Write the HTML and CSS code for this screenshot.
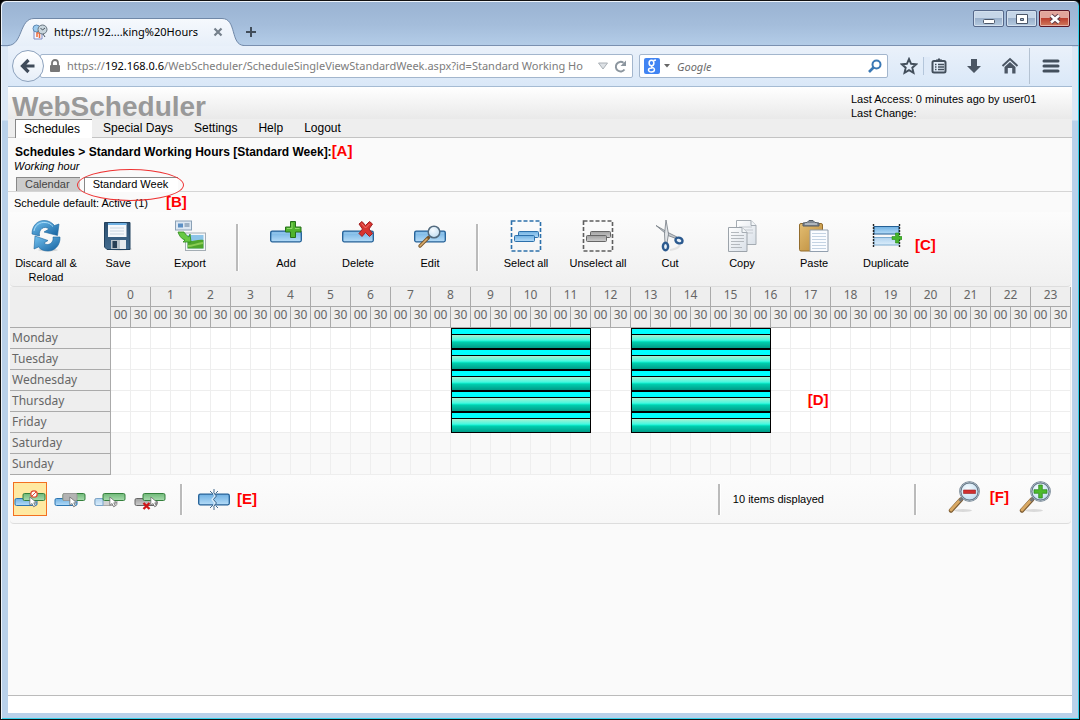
FILE: index.html
```html
<!DOCTYPE html>
<html lang="en">
<head>
    <meta charset="UTF-8">
    <meta name="viewport" content="width=device-width, initial-scale=1.0">
    <title>WebScheduler</title>
    <link rel="stylesheet" href="styles.css">
</head>
<body>
    <!-- Shared gradients and symbols -->
    <svg class="defs" width="0" height="0" aria-hidden="true">
        <defs>
            <linearGradient id="blue" x1="0" y1="0" x2="0" y2="1"><stop offset="0" stop-color="#6fb0e2"/><stop offset="1" stop-color="#b5dcf8"/></linearGradient>
            <linearGradient id="paleBlue" x1="0" y1="0" x2="0" y2="1"><stop offset="0" stop-color="#b0d2ee"/><stop offset="1" stop-color="#dceefb"/></linearGradient>
            <linearGradient id="gray" x1="0" y1="0" x2="0" y2="1"><stop offset="0" stop-color="#a0a0a0"/><stop offset="1" stop-color="#cdcdcd"/></linearGradient>
            <linearGradient id="green" x1="0" y1="0" x2="0" y2="1"><stop offset="0" stop-color="#6fb878"/><stop offset="1" stop-color="#a9dcae"/></linearGradient>
            <linearGradient id="arrowBlue" x1="0" y1="0" x2="1" y2="1"><stop offset="0" stop-color="#75c4f2"/><stop offset="1" stop-color="#14609e"/></linearGradient>
            <linearGradient id="paper" x1="0" y1="0" x2="1" y2="1"><stop offset="0" stop-color="#ffffff"/><stop offset="1" stop-color="#d9e0e8"/></linearGradient>
            <linearGradient id="board" x1="0" y1="0" x2="1" y2="1"><stop offset="0" stop-color="#e3bd72"/><stop offset="1" stop-color="#b98938"/></linearGradient>
            <linearGradient id="disk" x1="0" y1="0" x2="0" y2="1"><stop offset="0" stop-color="#2c4f70"/><stop offset="1" stop-color="#426b8e"/></linearGradient>
            <radialGradient id="glass" cx="0.4" cy="0.35" r="0.7"><stop offset="0" stop-color="#f6fbff"/><stop offset="1" stop-color="#bfdcf0"/></radialGradient>
            <symbol id="bar" viewBox="0 0 32 32">
                <rect x="0.7" y="11.2" width="30.6" height="10.6" rx="1.5" fill="url(#blue)" stroke="#215f96" stroke-width="1.3"/>
                <path d="M2 13h28" stroke="#9ccbee"/>
            </symbol>
            <symbol id="cursor" viewBox="0 0 12 14">
                <path d="M1 1v10l2.6-2.2 2 4 2-1-1.900-3.800h3.500z" fill="#fff" stroke="#666" stroke-width="0.9"/>
            </symbol>
            <symbol id="magnifier" viewBox="0 0 32 32">
                <ellipse cx="15" cy="29.500" rx="9" ry="1.500" fill="#000" opacity="0.12"/>
                <path d="M13 18.500 3 29.500" stroke="#7b5a2f" stroke-width="4.400" stroke-linecap="round"/>
                <path d="M12 19 3 29" stroke="#d9a964" stroke-width="2.800" stroke-linecap="round"/>
                <path d="m14.500 17-3 3" stroke="#777" stroke-width="3"/>
                <circle cx="21.500" cy="10.500" r="9.200" fill="url(#glass)" stroke="#5f7180" stroke-width="2.200"/>
                <circle cx="21.500" cy="10.500" r="9.400" fill="none" stroke="#b7c4ce" stroke-width="0.800"/>
            </symbol>
        </defs>
    </svg>

    <div class="window">
        <!-- Title bar -->
        <header class="titlebar">
            <div class="browser-tab">
                <svg class="tab-shape" width="236" height="28" viewBox="0 0 236 28" aria-hidden="true">
                    <defs><linearGradient id="tabFill" x1="0" y1="0" x2="0" y2="1"><stop offset="0" stop-color="#f6f9fd"/><stop offset="1" stop-color="#e7eff9"/></linearGradient></defs>
                    <path d="M0 27.500C15 27 11 .5 26 .5H214C229 .5 222 27 236 27.500V28H0Z" fill="url(#tabFill)"/>
                    <path d="M0 27.500C15 27 11 .5 26 .5H214C229 .5 222 27 236 27.500" fill="none" stroke="#7088a8"/>
                </svg>
                <svg class="favicon" width="16" height="16" viewBox="0 0 16 16" aria-hidden="true">
                    <path d="M2 5.500h8V15H2z" fill="#f7f7ff" stroke="#7e8ac2"/>
                    <path d="M5 8v5M5 8l3 2M7.500 10v4" stroke="#ee6c3b" stroke-width="1.500"/>
                    <circle cx="4.500" cy="4.500" r="3.500" fill="#9ccbee" stroke="#5d88b4"/>
                    <circle cx="10.500" cy="5.500" r="4.500" fill="#c9d6de" stroke="#66747f"/>
                    <path d="m8.500 4 2 2 2.500-2M11 10l2 3" fill="none" stroke="#48545e"/>
                </svg>
                <span class="tab-title">https://192....king%20Hours</span>
                <button class="tab-close" type="button" aria-label="Close tab">
                    <svg width="10" height="10" viewBox="0 0 10 10"><path d="m1.500 1.500 7 7m0-7-7 7" stroke="#75808b" stroke-width="2.200"/></svg>
                </button>
            </div>
            <button class="new-tab" type="button" aria-label="New tab">
                <svg width="12" height="12" viewBox="0 0 12 12"><path d="M6 1v10M1 6h10" stroke="#414d5a" stroke-width="2"/></svg>
            </button>
            <div class="window-buttons">
                <button type="button" aria-label="Minimize"><svg width="30" height="16" viewBox="0 0 30 16"><rect x="9.500" y="8.500" width="11" height="4" rx="1" fill="#fff" stroke="#4b5668"/></svg></button>
                <button type="button" aria-label="Maximize"><svg width="30" height="16" viewBox="0 0 30 16"><path d="M9.500 3.500h11v9h-11zM13.500 7.500h3v2h-3z" fill="#fff" fill-rule="evenodd" stroke="#4b5668"/></svg></button>
                <button class="close-window" type="button" aria-label="Close"><svg width="30" height="16" viewBox="0 0 30 16"><path d="m11 4.500 8 7m0-7-8 7" stroke="#5c3b47" stroke-width="4.500"/><path d="m11 4.500 8 7m0-7-8 7" stroke="#fff" stroke-width="2.600"/></svg></button>
            </div>
        </header>

        <!-- Address bar -->
        <div class="navbar">
            <button class="back" type="button" aria-label="Back">
                <svg width="16" height="16" viewBox="0 0 16 16"><path d="M14.500 8H4M8.500 2 2.500 8l6 6" fill="none" stroke="#3f4b59" stroke-width="3.200"/></svg>
            </button>
            <div class="url-box">
                <svg width="12" height="14" viewBox="0 0 12 14" aria-hidden="true"><path d="M3 6V4a3 3 0 0 1 6 0v2" fill="none" stroke="#777" stroke-width="1.800"/><rect x="1" y="6" width="10" height="7" rx="1" fill="#777"/></svg>
                <div class="url" role="textbox" aria-label="Address" contenteditable="true" spellcheck="false">https://<span class="host">192.168.0.6</span>/WebScheduler/ScheduleSingleViewStandardWeek.aspx?id=Standard Working Ho</div>
                <svg width="10" height="8" viewBox="0 0 10 8" aria-hidden="true"><path d="M.5 1h9L5 7z" fill="#dde1e5" stroke="#aab0b6"/></svg>
                <button type="button" aria-label="Reload"><svg width="13" height="13" viewBox="0 0 13 13"><path d="M10.500 9.500A4.800 4.800 0 1 1 9.500 2.800" fill="none" stroke="#8c969f" stroke-width="2"/><path d="M12 .5V6H6.500z" fill="#8c969f"/></svg></button>
            </div>
            <div class="search-box">
                <svg width="16" height="16" viewBox="0 0 16 16" aria-hidden="true"><rect width="16" height="16" rx="2" fill="#4184f3"/><ellipse cx="7.500" cy="5" rx="2.400" ry="2.800" fill="none" stroke="#fff" stroke-width="1.500"/><path d="M9.500 2.500 12 2M8 8c-2 1 2.500 1.500 2.500 3.500S8.500 14 7.300 14 4 13 4.500 11.500 8 10 8.500 10" fill="none" stroke="#fff" stroke-width="1.400"/></svg>
                <svg width="6" height="4" viewBox="0 0 6 4" aria-hidden="true"><path d="M0 0h6L3 3.500z" fill="#666"/></svg>
                <input type="text" placeholder="Google" aria-label="Search">
                <button type="button" aria-label="Search"><svg width="14" height="14" viewBox="0 0 14 14"><circle cx="8.500" cy="5.500" r="4" fill="none" stroke="#3a78b5" stroke-width="2"/><path d="m5.500 8.500-4.500 4.500" stroke="#3a78b5" stroke-width="2.600"/></svg></button>
            </div>
            <div class="nav-icons">
                <button type="button" aria-label="Bookmark"><svg width="18" height="18" viewBox="0 0 18 18"><path d="m9 2 2.100 4.800 5.100.5-3.900 3.400 1.200 5.200L9 13.200l-4.500 2.700 1.200-5.200-3.900-3.400 5.100-.5z" fill="none" stroke="#434f5c" stroke-width="1.900"/></svg></button>
                <button type="button" aria-label="Bookmarks list"><svg width="18" height="18" viewBox="0 0 18 18"><rect x="2.500" y="4" width="13" height="11.500" rx="1.500" fill="none" stroke="#434f5c" stroke-width="2"/><path d="M6 4.500V2.500h1.500L9 1l1.500 1.500H12v2z" fill="#434f5c"/><path d="M5 7.500h1.500M8 7.500h6M5 10h1.500M8 10h6M5 12.500h1.500M8 12.500h6" stroke="#434f5c" stroke-width="1.300"/></svg></button>
                <button type="button" aria-label="Downloads"><svg width="18" height="18" viewBox="0 0 18 18"><path d="M6 2h6v7h4l-7 7-7-7h4z" fill="#4b5664"/></svg></button>
                <button type="button" aria-label="Home"><svg width="18" height="18" viewBox="0 0 18 18"><path d="m1.500 9 7.500-7 7.500 7" fill="none" stroke="#4b5664" stroke-width="2"/><path d="m9 5 5.500 5v6.500h-3.300V11H6.800v5.500H3.500V10z" fill="#4b5664"/></svg></button>
                <button class="menu" type="button" aria-label="Menu"><svg width="18" height="18" viewBox="0 0 18 18"><path d="M2 4h14M2 9h14M2 14h14" stroke="#434f5c" stroke-width="3" stroke-linecap="round"/></svg></button>
            </div>
        </div>

        <main class="page">
            <div class="banner">
                <h1>WebScheduler</h1>
                <p class="last-access">Last Access: 0 minutes ago by user01<br>Last Change:</p>
            </div>
            <nav class="main-menu">
                <a class="active" href="#">Schedules</a>
                <a href="#">Special Days</a>
                <a href="#">Settings</a>
                <a href="#">Help</a>
                <a href="#">Logout</a>
            </nav>

            <h2>Schedules &gt; Standard Working Hours [Standard Week]:<span class="mark">[A]</span></h2>
            <p class="description">Working hour</p>
            <div class="sub-tabs">
                <a href="#">Calendar</a>
                <a class="active" href="#">Standard Week</a>
            </div>
            <p class="default-line">Schedule default: Active (1) <span class="mark">[B]</span></p>

            <!-- Main toolbar -->
            <div class="toolbar">
                <button type="button">
                    <svg width="32" height="32" viewBox="0 0 32 32">
                        <ellipse cx="18" cy="30" rx="10" ry="1.500" fill="#000" opacity="0.12"/>
                        <path d="M2 14C2 6 7 .5 14 .5c4.500 0 8 2 10.500 5L29 4l-1.500 11.500L14 12l5-3c-2.500-2-5-2-7-.5-2 1.500-3 4-2.500 7.500z" fill="url(#arrowBlue)" stroke="#1b649c" stroke-width="0.600"/>
                        <path d="M30 17c.5 8-5 14-12 14-4.500 0-7.500-1.500-9.500-4L4 29l1-13 13 4.500-4 2.500c2 2 4.500 2 6.500.5s3-3.500 2.500-6.500z" fill="url(#arrowBlue)" stroke="#1b649c" stroke-width="0.600"/>
                        <path d="M4 11C5 5 10 2 15 2.500c4 0 6 2 8 4" fill="none" stroke="#a9dcf8"/>
                    </svg>
                    <span>Discard all &amp; Reload</span>
                </button>
                <button type="button">
                    <svg width="32" height="32" viewBox="0 0 32 32">
                        <ellipse cx="18" cy="29" rx="12" ry="1.500" fill="#000" opacity="0.200"/>
                        <path d="M2.500 2.500h25.500v27H5l-2.500-2.500z" fill="url(#disk)" stroke="#22425f"/>
                        <rect x="6" y="3.500" width="18.500" height="13.500" fill="#f5f8fb"/>
                        <path d="M6 4h18.500" stroke="#6fb0e2" stroke-width="2"/>
                        <path d="M8 8h14M8 11h14M8 14h14" stroke="#c9d5e0"/>
                        <rect x="9" y="20" width="15" height="9" fill="#b9c2ca"/>
                        <rect x="10.500" y="21" width="4.500" height="7" fill="#283f55"/>
                        <path d="M18 20h6v9h-6z" fill="#e8ecef"/>
                    </svg>
                    <span>Save</span>
                </button>
                <button type="button">
                    <svg width="32" height="32" viewBox="0 0 32 32">
                        <rect x="1.500" y="1" width="16" height="9" fill="#dce7f2" stroke="#8ba1b6"/>
                        <rect x="4" y="3.500" width="5" height="4" fill="#5b8fc4"/>
                        <path d="M10.500 4h5M10.500 6h5" stroke="#5d7b98"/>
                        <rect x="11.500" y="13" width="20" height="17.500" fill="#f5f7f9" stroke="#a4adb4"/>
                        <path d="M13.500 15h16v13.500h-16z" fill="#8cc4e8"/>
                        <path d="M13.500 21c5 1 10-2 16-1v8.500h-16z" fill="#4ea52c"/>
                        <path d="M14 26c5 0 7-2 15-3" stroke="#8acb53" stroke-width="2" fill="none"/>
                        <path d="M4 12h6c1 2 3 4 5 5l1-3 1 8h-8l2-2c-4-1-6-5-7-8z" fill="#68c944" stroke="#2d8a1d" stroke-width="0.800"/>
                    </svg>
                    <span>Export</span>
                </button>
                <span class="separator"></span>
                <button type="button">
                    <svg width="32" height="32" viewBox="0 0 32 32">
                        <use href="#bar"/>
                        <path d="M20.500 1.500h5v5.500h5.500v5h-5.500v5.500h-5V12h-5V7h5z" fill="#4fb32d" stroke="#26701a"/>
                        <path d="M22 3v5.500h-5M25 8.500h4.500" fill="none" stroke="#92dc6c"/>
                    </svg>
                    <span>Add</span>
                </button>
                <button type="button">
                    <svg width="32" height="32" viewBox="0 0 32 32">
                        <use href="#bar"/>
                        <path d="m17 4 3-2.500 3.500 4 4-4 3 2.500-3.500 5 3.500 4.500-3 3-4-4-3.500 4-3-3 3.500-4.500z" fill="#d8342f" stroke="#a11f20"/>
                        <path d="m19.500 3.500 4 4.500 4-4" fill="none" stroke="#ee746c"/>
                    </svg>
                    <span>Delete</span>
                </button>
                <button type="button">
                    <svg width="32" height="32" viewBox="0 0 32 32">
                        <use href="#bar"/>
                        <path d="M14.500 17.500 6 26" stroke="#76552b" stroke-width="3.400" stroke-linecap="round"/>
                        <path d="m13 19-7 7" stroke="#dcae6d" stroke-width="1.600" stroke-linecap="round"/>
                        <circle cx="20" cy="12" r="5.800" fill="url(#glass)" stroke="#526a7e" stroke-width="1.500"/>
                    </svg>
                    <span>Edit</span>
                </button>
                <span class="separator"></span>
                <button type="button">
                    <svg width="32" height="32" viewBox="0 0 32 32">
                        <rect x="1.500" y="1" width="29" height="30" fill="none" stroke="#2c70ab" stroke-width="1.600" stroke-dasharray="4 2"/>
                        <rect x="8.500" y="11.500" width="20" height="6" rx="1" fill="url(#blue)" stroke="#2c70ab"/>
                        <rect x="4.500" y="15.500" width="20" height="6" rx="1" fill="url(#blue)" stroke="#2c70ab"/>
                    </svg>
                    <span>Select all</span>
                </button>
                <button type="button">
                    <svg width="32" height="32" viewBox="0 0 32 32">
                        <rect x="1.500" y="1" width="29" height="30" fill="none" stroke="#5e5e5e" stroke-width="1.600" stroke-dasharray="4 2"/>
                        <rect x="8.500" y="11.500" width="20" height="6" rx="1" fill="url(#gray)" stroke="#666"/>
                        <rect x="4.500" y="15.500" width="20" height="6" rx="1" fill="url(#gray)" stroke="#666"/>
                    </svg>
                    <span>Unselect all</span>
                </button>
                <button type="button">
                    <svg width="32" height="32" viewBox="0 0 32 32">
                        <path d="m2 5.500 12 10 8 3 1-1.500-8-4z" fill="#c5cacf" stroke="#737b83" stroke-width="0.800"/>
                        <path d="M12 0 14.500 14 13 23h-2l-.5-9z" fill="#e2e5e8" stroke="#737b83" stroke-width="0.800"/>
                        <ellipse cx="25" cy="20.500" rx="3.600" ry="2.800" fill="#e9f1f8" stroke="#2c5a8f" stroke-width="2.400" transform="rotate(20 25 20.500)"/>
                        <ellipse cx="11.500" cy="26.500" rx="2.600" ry="3.800" fill="#e9f1f8" stroke="#2c5a8f" stroke-width="2.400"/>
                        <path d="M16 30q8-1 10-5" fill="none" stroke="#000" stroke-width="2" opacity="0.080"/>
                    </svg>
                    <span>Cut</span>
                </button>
                <button type="button">
                    <svg width="32" height="32" viewBox="0 0 32 32">
                        <path d="M10.500.5H25l5 5v19H10.500z" fill="url(#paper)" stroke="#a5acb3"/>
                        <path d="M25 .5v5h5" fill="#f3f6f8" stroke="#a5acb3"/>
                        <path d="M13 7h13M13 10h14M13 13h14" stroke="#c5cad0"/>
                        <path d="M2.500 7.500H16l5 5v19H2.500z" fill="url(#paper)" stroke="#9ca3aa"/>
                        <path d="M16 7.500v5h5" fill="#f3f6f8" stroke="#a5acb3"/>
                        <path d="M5 12.500h8M5 15.500h13M5 18.500h13M5 21.500h13M5 24.500h9M5 27.500h11" stroke="#b4b9be"/>
                    </svg>
                    <span>Copy</span>
                </button>
                <button type="button">
                    <svg width="32" height="32" viewBox="0 0 32 32">
                        <rect x="1.500" y="3.500" width="23" height="27.500" rx="1.500" fill="url(#board)" stroke="#936c2c"/>
                        <path d="M5 6V3l4-.500 2-2h4l2 2 4 .5v3z" fill="#818a94" stroke="#525b65"/>
                        <path d="M7 4h12" stroke="#dce0e4"/>
                        <path d="M12 10h18v21.500H12z" fill="#fafcff" stroke="#929fae"/>
                        <path d="M14 13.500h14M14 16.500h14M14 19.500h14M14 22.500h14M14 25.500h14M14 28.500h14" stroke="#c4d3e3"/>
                    </svg>
                    <span>Paste</span>
                </button>
                <button type="button">
                    <svg width="32" height="32" viewBox="0 0 32 32">
                        <rect x="4" y="6.500" width="25" height="7.500" fill="url(#blue)" stroke="#245f94"/>
                        <rect x="4" y="17.500" width="25" height="7.500" fill="url(#paleBlue)" stroke="#7baacf"/>
                        <path d="M3.500 4v24M29.500 4v24" stroke="#222" stroke-width="1.400" stroke-dasharray="2 1"/>
                        <path d="M25.500 13h3.500v3.500h3v3h-3V23h-3.500v-3.500H22v-3h3.500z" fill="#45b52b" stroke="#2a8a1b" stroke-width="0.600"/>
                    </svg>
                    <span>Duplicate</span>
                </button>
                <span class="mark">[C]</span>
            </div>

            <!-- Week grid, filled by script.js -->
            <div class="schedule">
                <table class="week">
                    <colgroup><col class="day-col"><col span="48"></colgroup>
                    <thead>
                        <tr id="hours"><td class="corner" rowspan="2"></td></tr>
                        <tr id="halves"></tr>
                    </thead>
                    <tbody id="days"></tbody>
                </table>
                <span class="mark mark-d">[D]</span>
            </div>

            <!-- Bottom toolbar -->
            <div class="bottom-bar">
                <div class="modes">
                    <button class="selected" type="button" aria-label="No overlap">
                        <svg width="32" height="32" viewBox="0 0 32 32"><rect x="1" y="15.500" width="22" height="7" rx="1.500" fill="url(#blue)" stroke="#2b75b2"/><rect x="9" y="10.500" width="22" height="7" rx="1.500" fill="url(#green)" stroke="#34803c"/><circle cx="20" cy="11" r="3.200" fill="#fff" stroke="#e04a30" stroke-width="1.300"/><path d="m18 13 4-4" stroke="#e04a30"/><use href="#cursor" x="15" y="13" width="10" height="12"/></svg>
                    </button>
                    <button type="button" aria-label="Cut new item">
                        <svg width="32" height="32" viewBox="0 0 32 32"><rect x="1" y="15.500" width="22" height="7" rx="1.500" fill="url(#blue)" stroke="#2b75b2"/><rect x="9" y="10.500" width="22" height="7" rx="1.500" fill="url(#green)" stroke="#34803c"/><rect x="9" y="10.500" width="14" height="7" rx="1" fill="#b3b3b3" stroke="#999"/><use href="#cursor" x="15" y="13" width="10" height="12"/></svg>
                    </button>
                    <button type="button" aria-label="Cut existing item">
                        <svg width="32" height="32" viewBox="0 0 32 32"><rect x="1" y="15.500" width="22" height="7" rx="1.500" fill="#d2d2d2" stroke="#aaa"/><path d="M9 15.500H2.500Q1 15.500 1 17v4q0 1.500 1.500 1.500H9z" fill="url(#paleBlue)" stroke="#7aa5cb"/><rect x="9" y="10.500" width="22" height="7" rx="1.500" fill="url(#green)" stroke="#34803c"/><use href="#cursor" x="15" y="13" width="10" height="12"/></svg>
                    </button>
                    <button type="button" aria-label="Delete existing item">
                        <svg width="32" height="32" viewBox="0 0 32 32"><rect x="1" y="15.500" width="22" height="7" rx="1.500" fill="url(#gray)" stroke="#666"/><rect x="9" y="10.500" width="22" height="7" rx="1.500" fill="url(#green)" stroke="#34803c"/><use href="#cursor" x="16" y="13" width="10" height="12"/><path d="m9.500 20 6 6m0-6-6 6" stroke="#cf1717" stroke-width="2.400"/></svg>
                    </button>
                </div>
                <span class="separator"></span>
                <button class="split" type="button" aria-label="Split">
                    <svg width="32" height="32" viewBox="0 0 32 32"><rect x="0.700" y="11.200" width="30.600" height="10.600" rx="1.500" fill="url(#blue)" stroke="#215f96" stroke-width="1.300"/><path d="m14 9 3 4-3 3.500 3 3.500-3 4" fill="none" stroke="#dcecf8" stroke-width="1.200"/><path d="m15.500 9 3 4-3 3.500 3 3.500-3 4M12 8l3 3M20 8l-2 2M16 6v3M12 25l3-3M20 25l-2-2M16 24v3" fill="none" stroke="#476c8d" stroke-width="1"/></svg>
                </button>
                <span class="mark">[E]</span>
                <div class="status">
                    <span class="separator"></span>
                    <p>10 items displayed</p>
                    <span class="separator"></span>
                    <div class="zoom">
                        <button type="button" aria-label="Zoom out"><svg width="32" height="32" viewBox="0 0 32 32"><use href="#magnifier"/><path d="M15.500 9h12v3.500h-12z" fill="#d12f2f" stroke="#9c1f1f" stroke-width="0.600"/></svg></button>
                        <span class="mark">[F]</span>
                        <button type="button" aria-label="Zoom in"><svg width="32" height="32" viewBox="0 0 32 32"><use href="#magnifier"/><path d="M19.700 4h3.600v4.700H28v3.600h-4.700V17h-3.600v-4.700H15V8.700h4.700z" fill="#4dbb2c" stroke="#26821b" stroke-width="0.700"/></svg></button>
                    </div>
                </div>
            </div>
        </main>
        <footer class="statusbar"></footer>
    </div>

    <script src="script.js"></script>
</body>
</html>
```
FILE: styles.css
```css
/* General Styles */
* {
    box-sizing: border-box;
}

body {
    margin: 0;
    background-color: #000;
    font-family: "Liberation Sans", Arial, sans-serif;
    font-size: 11px;
    line-height: 14px;
    color: #000;
}

h1, h2, p {
    margin: 0;
}

button {
    padding: 0;
    border: none;
    background: none;
    font: inherit;
    color: inherit;
    cursor: pointer;
}

svg {
    display: block;
    flex: none;
}

.defs {
    position: absolute;
}

/* Browser window */
.window {
    display: flex;
    flex-direction: column;
    min-height: 100vh;
    padding: 0 6px 6px;
    border: 1px solid #111;
    border-radius: 6px 6px 0 0;
    background: linear-gradient(#9ab3d2, #a4bddb 24px, #b4cde8 45px, #dce8f6 46px, #dce8f6 119px, #b9d1ea 120px);
    box-shadow: inset 1px 1px #eef4fb, inset -1px -1px #35d0ea;
}

.titlebar {
    display: flex;
    align-items: flex-end;
    height: 45px;
    margin: 0 -6px;
    padding-left: 7px;
    border-bottom: 1px solid #7a90b0;
}

.browser-tab {
    position: relative;
    display: flex;
    align-items: center;
    width: 236px;
    height: 28px;
    margin-bottom: -1px;
    padding-left: 24px;
    font-family: "Noto Sans", sans-serif;
}

.tab-shape {
    position: absolute;
    left: 0;
    top: 0;
}

.favicon, .tab-title, .tab-close {
    position: relative;
}

.tab-title {
    width: 159px;
    margin-left: 6px;
    white-space: nowrap;
}

.new-tab {
    margin: 0 0 7px 1px;
}

.window-buttons {
    display: flex;
    gap: 2px;
    align-self: flex-start;
    margin: 9px 9px 0 auto;
}

.window-buttons button {
    width: 31px;
    height: 17px;
    border: 1px solid #56688a;
    border-radius: 2px;
    background: linear-gradient(#c6d6e8 50%, #9bb1cc 50%, #b5cae0);
    box-shadow: inset 0 0 0 1px #d3e0ee;
}

.window-buttons .close-window {
    border-color: #5b1525;
    background: linear-gradient(#e2a59b 45%, #bc4030 50%, #cf7a5d);
    box-shadow: inset 0 0 0 1px #e6b0a5;
}

/* Address bar */
.navbar {
    display: flex;
    align-items: center;
    height: 41px;
    margin: 0 1px;
    padding-left: 4px;
    border-bottom: 1px solid #a5bbd3;
    background: linear-gradient(#eaf1fa, #dae8f8);
    font-family: "Noto Sans", sans-serif;
}

.back {
    z-index: 1;
    display: flex;
    align-items: center;
    justify-content: center;
    width: 32px;
    height: 32px;
    border: 1px solid #8da2bd;
    border-radius: 50%;
    background: linear-gradient(#fff, #e6eef8);
}

.url-box, .search-box {
    display: flex;
    align-items: center;
    height: 24px;
    border: 1px solid #a3b6cd;
    border-radius: 2px;
    background: #fff;
}

.url-box {
    flex: 1;
    gap: 6px;
    min-width: 0;
    margin-left: -4px;
    padding: 0 5px 0 8px;
}

.url {
    flex: 1;
    overflow: hidden;
    line-height: 20px;
    white-space: nowrap;
    color: #7c7c7c;
    outline: none;
}

.host {
    color: #000;
}

.search-box {
    width: 249px;
    gap: 4px;
    margin-left: 6px;
    padding: 0 5px 0 4px;
}

.search-box input {
    flex: 1;
    min-width: 0;
    padding: 0 3px;
    border: none;
    outline: none;
    font: italic 11px "Noto Sans", sans-serif;
}

.search-box input::placeholder {
    color: #6c6c6c;
}

.nav-icons {
    display: flex;
    align-items: center;
    height: 40px;
    padding-left: 12px;
}

.nav-icons button {
    width: 18px;
    margin-right: 18px;
}

.nav-icons button:first-child {
    margin-right: 12px;
}

.nav-icons button:nth-child(2) {
    margin-right: 17px;
    box-shadow: -6px 0 #dfeaf8, -7px 0 #b4c6db;
}

.nav-icons .menu {
    width: 43px;
    height: 36px;
    margin: 0 0 0 -8px;
    padding-left: 12px;
    border-left: 1px solid #b4c2d2;
}

/* Page header */
.page {
    flex: 1;
    margin: 0 1px;
    background: #fafafa;
}

.banner {
    display: flex;
    justify-content: space-between;
    height: 32px;
    padding: 5px 35px 0 4px;
    background: linear-gradient(#fff, #e9e9e9);
}

h1 {
    font-size: 28px;
    line-height: 30px;
    color: #999;
}

.last-access {
    width: 186px;
    white-space: nowrap;
}

.main-menu {
    display: flex;
    gap: 1px;
    align-items: flex-end;
    height: 19px;
    padding-left: 7px;
    border-bottom: 1px solid #c3c3c3;
    background: #eee;
    font-size: 12px;
}

.main-menu a {
    padding: 0 10px;
    line-height: 18px;
    color: #000;
    text-decoration: none;
}

.main-menu .active {
    margin-bottom: -1px;
    padding: 0 12px 0 8px;
    border: 1px solid #888;
    border-width: 1px 0 0 1px;
    background: #fff;
}

h2 {
    padding: 5px 0 0 7px;
    font-size: 12px;
    line-height: 15px;
}

.mark {
    font-size: 15px;
    font-weight: bold;
    line-height: 15px;
    color: #f00;
}

.description {
    padding-left: 6px;
    font-style: italic;
    line-height: 12px;
}

.sub-tabs {
    display: flex;
    gap: 4px;
    height: 20px;
    padding: 5px 0 0 8px;
    border-bottom: 1px solid #d5d5d5;
}

.sub-tabs a {
    height: 14px;
    padding: 0 10px 0 8px;
    border: 1px solid #888;
    border-width: 1px 0 0 1px;
    background: #ccc;
    line-height: 13px;
    color: #444;
    text-decoration: none;
}

.sub-tabs .active {
    position: relative;
    height: 15px;
    background: #fff;
    color: #000;
}

/* Red ring around the current tab */
.sub-tabs .active::after {
    content: "";
    position: absolute;
    left: -8px;
    top: -9px;
    width: 105px;
    height: 30px;
    border: 1px solid #e33;
    border-radius: 50%;
}

.default-line {
    height: 20px;
    padding: 2px 0 0 6px;
    line-height: 18px;
}

.default-line .mark {
    margin-left: 15px;
}

/* Toolbars */
.toolbar {
    display: flex;
    align-items: flex-start;
    height: 75px;
    margin: 0 1px 0 2px;
    padding-top: 8px;
    border-bottom: 1px solid #ddd;
    border-radius: 0 0 4px 4px;
    background: linear-gradient(#fcfcfc, #f0f0f0);
}

.toolbar button {
    display: flex;
    flex: none;
    flex-direction: column;
    align-items: center;
    gap: 4px;
    width: 72px;
}

.separator {
    flex: none;
    width: 3px;
    height: 31px;
    background: #bbb;
    border-right: 1px solid #fff;
}

.toolbar .separator {
    height: 47px;
    margin: 4px 11px 0 10px;
}

.toolbar .mark {
    margin: 17px 0 0 -7px;
}

.schedule {
    position: relative;
    margin: 0 1px 0 2px;
}

.mark-d {
    position: absolute;
    left: 75%;
    top: 105px;
    margin-left: 2px;
}

/* Week grid */
.week {
    width: 100%;
    table-layout: fixed;
    border-spacing: 0;
    font-family: "Noto Sans", sans-serif;
    font-size: 12px;
    line-height: 18px;
    color: #666;
}

.day-col {
    width: 101px;
}

.week th, .week td {
    height: 21px;
    padding: 0;
    border: 1px solid #eee;
    border-width: 0 1px 1px 0;
    background: #fff;
    font-weight: normal;
}

.week thead th, .week .corner, .week tbody th {
    border-color: #aaa;
    background: #eee;
}

.week thead th {
    line-height: 16px;
    vertical-align: top;
}

.week #hours th {
    height: 20px;
}

.week tbody th {
    padding-left: 2px;
    text-align: left;
}

.week .weekend td {
    background: #f9f9f9;
}

.week .busy {
    border: none;
}

.event {
    height: 21px;
    border: 1px solid #000;
    background: linear-gradient(#a8f0d0 32%, #48f8e0 58%, #10f0d0 64%, #00d0b0 68%, #009c88);
}

.event::before {
    content: "";
    display: block;
    height: 5px;
    border-bottom: 1px solid #000;
    background: #0ff;
}

/* Bottom toolbar */
.bottom-bar {
    display: flex;
    align-items: center;
    height: 49px;
    margin: 0 1px 0 2px;
    padding-left: 3px;
    border-bottom: 1px solid #ddd;
    border-radius: 0 0 4px 4px;
    background: linear-gradient(#fcfcfc, #f7f7f7);
}

.bottom-bar .mark {
    margin-bottom: 2px;
}

.modes {
    display: flex;
    gap: 6px;
    margin-right: 13px;
}

.modes button {
    width: 34px;
    height: 34px;
    border: 1px solid transparent;
}

.modes .selected {
    border-color: #f37021;
    background: #ffe9a2;
}

.split {
    margin: 0 7px 0 15px;
}

.status {
    display: flex;
    align-items: center;
    margin-left: auto;
}

.status p {
    width: 181px;
    margin-left: 12px;
}

.zoom {
    display: flex;
    align-items: center;
    gap: 10px;
    margin: 0 20px 4px 31px;
}

.statusbar {
    height: 18px;
    margin: 0 1px;
    border-top: 1px solid #bbb;
    background: #fff;
}
```
FILE: script.js
```js
const days = ["Monday", "Tuesday", "Wednesday", "Thursday", "Friday", "Saturday", "Sunday"];

// Busy ranges in half-hour slots: 08:30 - 12:00 and 13:00 - 16:30
const workingHours = [
    { start: 17, length: 7 },
    { start: 26, length: 7 }
];

const hoursRow = document.getElementById("hours");
const halvesRow = document.getElementById("halves");
const daysBody = document.getElementById("days");

for (let hour = 0; hour < 24; hour++) {
    hoursRow.insertAdjacentHTML("beforeend", `<th colspan="2">${hour}</th>`);
    halvesRow.insertAdjacentHTML("beforeend", "<th>00</th><th>30</th>");
}

days.forEach((day, index) => {
    const weekend = index > 4;
    let cells = `<th>${day}</th>`;
    for (let slot = 0; slot < 48; slot++) {
        const range = workingHours.find(item => item.start === slot);
        if (range && !weekend) {
            cells += `<td class="busy" colspan="${range.length}"><div class="event"></div></td>`;
            slot += range.length - 1;
        } else {
            cells += "<td></td>";
        }
    }
    daysBody.insertAdjacentHTML("beforeend", `<tr class="${weekend ? "weekend" : ""}">${cells}</tr>`);
});
```
